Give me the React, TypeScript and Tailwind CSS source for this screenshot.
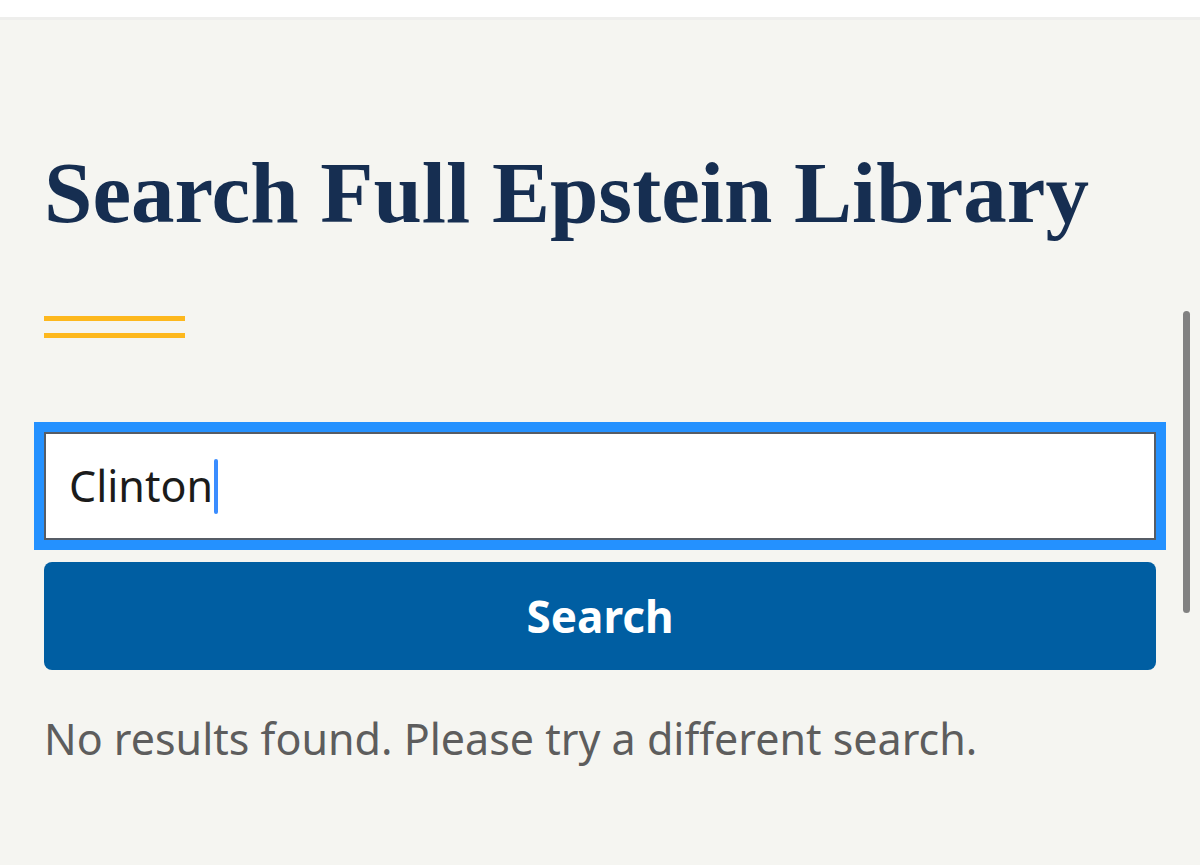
import React from 'react';

const App: React.FC = () => {
  return (
    <div className="relative h-[865px] w-[1200px] overflow-hidden bg-white">
      <div className="mt-[17px] h-[848px] border-t-[3px] border-[#eeeeec] bg-[#f5f5f1] px-[44px] pt-[129px]">
        <h1
          className="whitespace-nowrap text-[87px] font-bold leading-none text-[#162e51]"
          style={{ fontFamily: '"Liberation Serif", serif' }}
        >
          Search Full Epstein Library
        </h1>

        <div className="mt-[80px] flex w-[141px] flex-col gap-[12px]">
          <div className="h-[5px] bg-[#fdb81e]" />
          <div className="h-[5px] bg-[#fdb81e]" />
        </div>

        <div className="mt-[94px] outline-[10px] outline-solid outline-[#2491ff]">
          <div
            className="flex h-[108px] items-center border-[2px] border-[#565c65] bg-white pl-[23px] text-[43px] text-[#1b1b1b]"
            style={{ fontFamily: '"Noto Sans", sans-serif' }}
          >
            <span>Clinton</span>
            <span className="ml-[1px] h-[55px] w-[4px] rounded-full bg-[#3a8dff]" />
          </div>
        </div>

        <button
          className="mt-[22px] flex h-[108px] w-full items-center justify-center rounded-[8px] bg-[#005ea2] text-[44px] font-bold text-white"
          style={{ fontFamily: '"Noto Sans", sans-serif' }}
        >
          Search
        </button>

        <p
          className="mt-[47px] text-[43px] leading-none text-[#5d5d5d]"
          style={{ fontFamily: '"Noto Sans", sans-serif' }}
        >
          No results found. Please try a different search.
        </p>
      </div>

      <div className="absolute left-[1183px] top-[311px] h-[302px] w-[7px] rounded-full bg-[#818181]" />
    </div>
  );
};

export default App;
